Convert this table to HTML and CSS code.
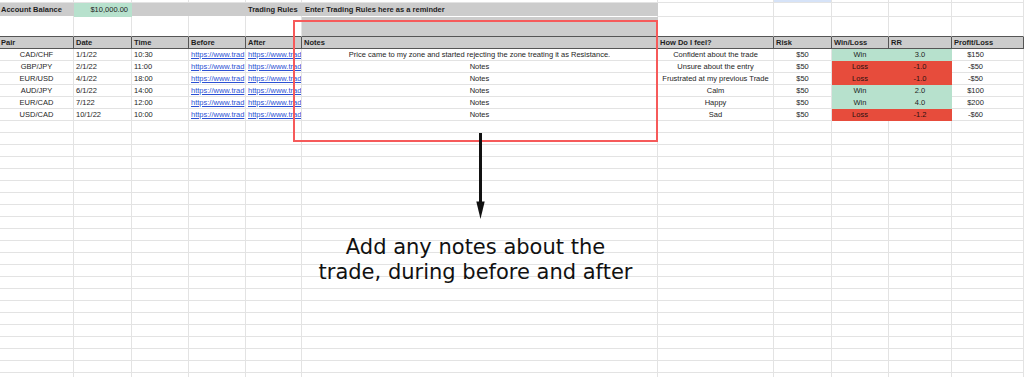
FILE: index.html
```html
<!DOCTYPE html>
<html>
<head>
<meta charset="utf-8">
<title>Trading Journal</title>
<link rel="stylesheet" href="styles.css">
</head>
<body>
<div class="page">
  <table class="sheet">
    <colgroup>
      <col class="wa"><col class="wb"><col class="wc"><col class="wd"><col class="we"><col class="wf"><col class="wg"><col class="wh"><col class="wi"><col class="wj"><col class="wk">
    </colgroup>
    <tbody>
      <tr class="r0"><td></td><td></td><td></td><td></td><td></td><td></td><td></td><td class="sel"></td><td></td><td></td><td></td></tr>
      <tr class="r1">
        <td class="gray b first">Account Balance</td>
        <td class="green r">$10,000.00</td>
        <td class="gray"></td>
        <td class="gray"></td>
        <td class="gray b">Trading Rules</td>
        <td class="gray b rules">Enter Trading Rules here as a reminder</td>
        <td></td><td></td><td></td><td></td><td></td>
      </tr>
      <tr class="r2"><td></td><td></td><td></td><td></td><td></td><td class="gray"></td><td></td><td></td><td></td><td></td><td></td></tr>
      <tr class="hd">
        <td class="first">Pair</td><td>Date</td><td>Time</td><td>Before</td><td>After</td><td>Notes</td><td>How Do I feel?</td><td>Risk</td><td>Win/Loss</td><td>RR</td><td>Profit/Loss</td>
      </tr>
      <tr class="d">
        <td class="c">CAD/CHF</td><td>1/1/22</td><td>10:30</td><td class="lnk"><span>https://www.trad</span></td><td class="lnk"><span>https://www.tradi</span></td>
        <td class="c">Price came to my zone and started rejecting the zone treating it as Resistance.</td>
        <td class="c">Confident about the trade</td><td class="c">$50</td><td class="c green">Win</td><td class="c green">3.0</td><td class="c pl">$150</td>
      </tr>
      <tr class="d">
        <td class="c">GBP/JPY</td><td>2/1/22</td><td>11:00</td><td class="lnk"><span>https://www.trad</span></td><td class="lnk"><span>https://www.tradi</span></td>
        <td class="c">Notes</td>
        <td class="c">Unsure about the entry</td><td class="c">$50</td><td class="c red">Loss</td><td class="c red">-1.0</td><td class="c pl">-$50</td>
      </tr>
      <tr class="d">
        <td class="c">EUR/USD</td><td>4/1/22</td><td>18:00</td><td class="lnk"><span>https://www.trad</span></td><td class="lnk"><span>https://www.tradi</span></td>
        <td class="c">Notes</td>
        <td class="c">Frustrated at my previous Trade</td><td class="c">$50</td><td class="c red">Loss</td><td class="c red">-1.0</td><td class="c pl">-$50</td>
      </tr>
      <tr class="d">
        <td class="c">AUD/JPY</td><td>6/1/22</td><td>14:00</td><td class="lnk"><span>https://www.trad</span></td><td class="lnk"><span>https://www.tradi</span></td>
        <td class="c">Notes</td>
        <td class="c">Calm</td><td class="c">$50</td><td class="c green">Win</td><td class="c green">2.0</td><td class="c pl">$100</td>
      </tr>
      <tr class="d">
        <td class="c">EUR/CAD</td><td>7/122</td><td>12:00</td><td class="lnk"><span>https://www.trad</span></td><td class="lnk"><span>https://www.tradi</span></td>
        <td class="c">Notes</td>
        <td class="c">Happy</td><td class="c">$50</td><td class="c green">Win</td><td class="c green">4.0</td><td class="c pl">$200</td>
      </tr>
      <tr class="d">
        <td class="c">USD/CAD</td><td>10/1/22</td><td>10:00</td><td class="lnk"><span>https://www.trad</span></td><td class="lnk"><span>https://www.tradi</span></td>
        <td class="c">Notes</td>
        <td class="c">Sad</td><td class="c">$50</td><td class="c red">Loss</td><td class="c red">-1.2</td><td class="c pl">-$60</td>
      </tr>
      <tr class="e"><td></td><td></td><td></td><td></td><td></td><td></td><td></td><td></td><td></td><td></td><td></td></tr>
      <tr class="e"><td></td><td></td><td></td><td></td><td></td><td></td><td></td><td></td><td></td><td></td><td></td></tr>
      <tr class="e"><td></td><td></td><td></td><td></td><td></td><td></td><td></td><td></td><td></td><td></td><td></td></tr>
      <tr class="e"><td></td><td></td><td></td><td></td><td></td><td></td><td></td><td></td><td></td><td></td><td></td></tr>
      <tr class="e"><td></td><td></td><td></td><td></td><td></td><td></td><td></td><td></td><td></td><td></td><td></td></tr>
      <tr class="e"><td></td><td></td><td></td><td></td><td></td><td></td><td></td><td></td><td></td><td></td><td></td></tr>
      <tr class="e"><td></td><td></td><td></td><td></td><td></td><td></td><td></td><td></td><td></td><td></td><td></td></tr>
      <tr class="e"><td></td><td></td><td></td><td></td><td></td><td></td><td></td><td></td><td></td><td></td><td></td></tr>
      <tr class="e"><td></td><td></td><td></td><td></td><td></td><td></td><td></td><td></td><td></td><td></td><td></td></tr>
      <tr class="e"><td></td><td></td><td></td><td></td><td></td><td></td><td></td><td></td><td></td><td></td><td></td></tr>
      <tr class="e"><td></td><td></td><td></td><td></td><td></td><td></td><td></td><td></td><td></td><td></td><td></td></tr>
      <tr class="e"><td></td><td></td><td></td><td></td><td></td><td></td><td></td><td></td><td></td><td></td><td></td></tr>
      <tr class="e"><td></td><td></td><td></td><td></td><td></td><td></td><td></td><td></td><td></td><td></td><td></td></tr>
      <tr class="e"><td></td><td></td><td></td><td></td><td></td><td></td><td></td><td></td><td></td><td></td><td></td></tr>
      <tr class="e"><td></td><td></td><td></td><td></td><td></td><td></td><td></td><td></td><td></td><td></td><td></td></tr>
      <tr class="e"><td></td><td></td><td></td><td></td><td></td><td></td><td></td><td></td><td></td><td></td><td></td></tr>
      <tr class="e"><td></td><td></td><td></td><td></td><td></td><td></td><td></td><td></td><td></td><td></td><td></td></tr>
      <tr class="e"><td></td><td></td><td></td><td></td><td></td><td></td><td></td><td></td><td></td><td></td><td></td></tr>
      <tr class="e"><td></td><td></td><td></td><td></td><td></td><td></td><td></td><td></td><td></td><td></td><td></td></tr>
      <tr class="e"><td></td><td></td><td></td><td></td><td></td><td></td><td></td><td></td><td></td><td></td><td></td></tr>
      <tr class="e"><td></td><td></td><td></td><td></td><td></td><td></td><td></td><td></td><td></td><td></td><td></td></tr>
      <tr class="e"><td></td><td></td><td></td><td></td><td></td><td></td><td></td><td></td><td></td><td></td><td></td></tr>
    </tbody>
  </table>

  <div class="highlight"></div>
  <svg class="arrow" width="20" height="95" viewBox="0 0 20 95">
    <line x1="10.5" y1="5" x2="10.5" y2="76" stroke="#111" stroke-width="3"/>
    <polygon points="6.3,73.5 14.7,73.5 10.5,91" fill="#111"/>
  </svg>
  <div class="callout">Add any notes about the<br>trade, during before and after</div>
</div>
</body>
</html>
```

FILE: styles.css
```css
html, body {
  margin: 0;
  padding: 0;
  background: #ffffff;
}

.page {
  position: relative;
  width: 1024px;
  height: 377px;
  overflow: hidden;
  background: #ffffff;
}

.sheet {
  table-layout: fixed;
  width: 1024px;
  border-collapse: separate;
  border-spacing: 0;
  font-family: "Liberation Sans", Arial, sans-serif;
  font-size: 7.5px;
  color: #1e1e1e;
}

.wa { width: 74px; }
.wb { width: 58px; }
.wc { width: 57px; }
.wd { width: 57px; }
.we { width: 56px; }
.wf { width: 356px; }
.wg { width: 116px; }
.wh { width: 58px; }
.wi { width: 57px; }
.wj { width: 63px; }
.wk { width: 72px; }

.sheet td {
  padding: 0 2px;
  border-right: 1px solid #e3e3e3;
  border-bottom: 1px solid #e3e3e3;
  white-space: nowrap;
  overflow: hidden;
  line-height: 11px;
  text-align: left;
  vertical-align: middle;
}

.sheet td.first { padding-left: 1px; }

.r0 td { height: 2px; padding: 0; }
.r0 td.sel { background: #d6e3f8; }

.r1 td { height: 13px; line-height: 13px; }
.r2 td { height: 19px; border-bottom-color: #555555; }

.hd td {
  height: 11px;
  background: #cccccc;
  font-weight: bold;
  border-right-color: #555555;
  border-bottom-color: #555555;
}

.d td { height: 11px; }
.e td { height: 11px; padding: 0; }

.gray { background: #cccccc; }
.sheet td.gray { border-right-color: #cccccc; }
.r1 td.gray { border-bottom-color: #ffffff; }

.green { background: #b7e1cd; }
.sheet td.green { border-right-color: #b7e1cd; border-bottom-color: #b7e1cd; }
.red { background: #e74c3c; }
.sheet td.red { border-right-color: #e74c3c; border-bottom-color: #e74c3c; color: #2a1010; }

.b { font-weight: bold; }
.sheet td.c { text-align: center; }
.sheet td.r { text-align: right; padding-right: 3px; }
.sheet td.rules { padding-left: 3px; }
.sheet td.pl { padding-right: 26px; }
.sheet td.lnk { text-overflow: clip; }

.lnk span {
  color: #2b50d4;
  text-decoration: underline;
}

.highlight {
  position: absolute;
  left: 293px;
  top: 20px;
  width: 361px;
  height: 118px;
  border: 2px solid #f65a5a;
}

.arrow {
  position: absolute;
  left: 470px;
  top: 128px;
}

.callout {
  position: absolute;
  left: 300px;
  top: 235px;
  width: 351px;
  text-align: center;
  font-family: "DejaVu Sans", Verdana, sans-serif;
  font-size: 21px;
  line-height: 25px;
  color: #111111;
}
```
